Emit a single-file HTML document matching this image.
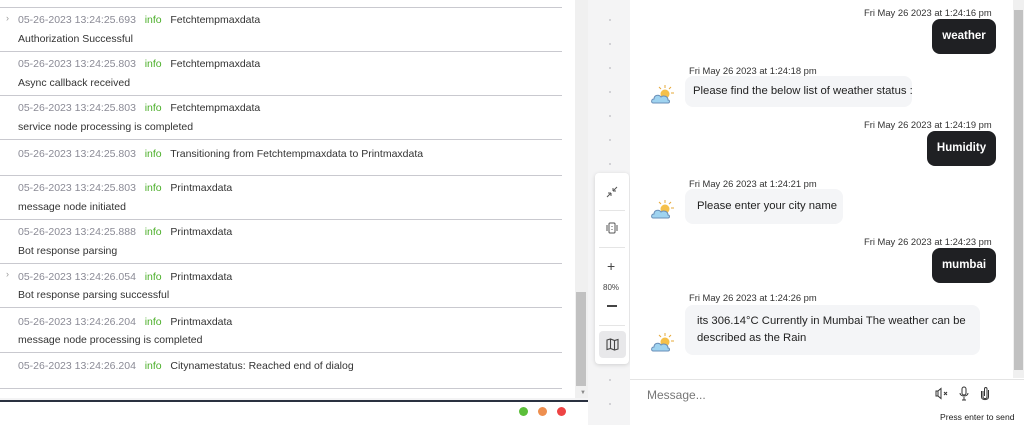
<!DOCTYPE html><html><head><style>
body{margin:0;width:1024px;height:425px;position:relative;overflow:hidden;background:#f4f4f5;font-family:"Liberation Sans",sans-serif}
.a{position:absolute}
.grid{background-image:radial-gradient(#cfcfd4 1px,transparent 1.2px);background-size:24px 24px;background-position:10px 8px}
.log{font-size:10.5px;color:#333;white-space:nowrap}
.ts{color:#8a8a95}.inf{color:#4caf2a}
.sep{height:1px;background:#c9c9cf;left:0;width:562px}
.tm{font-size:9.4px;color:#333;white-space:nowrap}
.ub{background:#1f2023;color:#fff;border-radius:8px;font-weight:bold;font-size:11.5px;text-align:center;white-space:nowrap}
.bb{background:#f4f5f7;border-radius:8px;font-size:11.3px;color:#222;white-space:nowrap}
</style></head><body>
<div class="a grid" style="left:588px;top:0;width:42px;height:425px"></div>
<div class="a" style="left:0;top:0;width:575px;height:398px;background:#fff"></div>
<div class="a" style="left:575px;top:0;width:13px;height:398px;background:#f0f0f0"></div>
<div class="a" style="left:576px;top:292px;width:10px;height:94px;background:#c1c1c1"></div>
<div class="a" style="left:580px;top:390px;font-size:6px;color:#888">▼</div>
<div class="a" style="left:0;top:400px;width:588px;height:2px;background:#2a3140"></div>
<div class="a" style="left:0;top:402px;width:588px;height:23px;background:#fff"></div>
<div class="a" style="left:519px;top:407px;width:9px;height:9px;border-radius:50%;background:#5cbf3a"></div>
<div class="a" style="left:538px;top:407px;width:9px;height:9px;border-radius:50%;background:#ee8f4f"></div>
<div class="a" style="left:557px;top:407px;width:9px;height:9px;border-radius:50%;background:#ee4444"></div>

<div class="a sep" style="top:7px"></div>
<div class="a log" style="left:6px;top:13px;color:#999;font-size:9px">›</div>
<div class="a log" style="left:18px;top:14px"><span class="ts">05-26-2023 13:24:25.693</span>&nbsp;&nbsp; <span class="inf">info</span>&nbsp;&nbsp; Fetchtempmaxdata</div>
<div class="a log" style="left:18px;top:33px">Authorization Successful</div>
<div class="a sep" style="top:51px"></div>
<div class="a log" style="left:18px;top:58px"><span class="ts">05-26-2023 13:24:25.803</span>&nbsp;&nbsp; <span class="inf">info</span>&nbsp;&nbsp; Fetchtempmaxdata</div>
<div class="a log" style="left:18px;top:77px">Async callback received</div>
<div class="a sep" style="top:95px"></div>
<div class="a log" style="left:18px;top:102px"><span class="ts">05-26-2023 13:24:25.803</span>&nbsp;&nbsp; <span class="inf">info</span>&nbsp;&nbsp; Fetchtempmaxdata</div>
<div class="a log" style="left:18px;top:121px">service node processing is completed</div>
<div class="a sep" style="top:139px"></div>
<div class="a log" style="left:18px;top:148px"><span class="ts">05-26-2023 13:24:25.803</span>&nbsp;&nbsp; <span class="inf">info</span>&nbsp;&nbsp; Transitioning from Fetchtempmaxdata to Printmaxdata</div>
<div class="a sep" style="top:175px"></div>
<div class="a log" style="left:18px;top:182px"><span class="ts">05-26-2023 13:24:25.803</span>&nbsp;&nbsp; <span class="inf">info</span>&nbsp;&nbsp; Printmaxdata</div>
<div class="a log" style="left:18px;top:201px">message node initiated</div>
<div class="a sep" style="top:219px"></div>
<div class="a log" style="left:18px;top:226px"><span class="ts">05-26-2023 13:24:25.888</span>&nbsp;&nbsp; <span class="inf">info</span>&nbsp;&nbsp; Printmaxdata</div>
<div class="a log" style="left:18px;top:245px">Bot response parsing</div>
<div class="a sep" style="top:263px"></div>
<div class="a log" style="left:6px;top:269px;color:#999;font-size:9px">›</div>
<div class="a log" style="left:18px;top:271px"><span class="ts">05-26-2023 13:24:26.054</span>&nbsp;&nbsp; <span class="inf">info</span>&nbsp;&nbsp; Printmaxdata</div>
<div class="a log" style="left:18px;top:289px">Bot response parsing successful</div>
<div class="a sep" style="top:307px"></div>
<div class="a log" style="left:18px;top:316px"><span class="ts">05-26-2023 13:24:26.204</span>&nbsp;&nbsp; <span class="inf">info</span>&nbsp;&nbsp; Printmaxdata</div>
<div class="a log" style="left:18px;top:334px">message node processing is completed</div>
<div class="a sep" style="top:352px"></div>
<div class="a log" style="left:18px;top:360px"><span class="ts">05-26-2023 13:24:26.204</span>&nbsp;&nbsp; <span class="inf">info</span>&nbsp;&nbsp; Citynamestatus: Reached end of dialog</div>
<div class="a sep" style="top:388px"></div>

<div class="a" style="left:595px;top:173px;width:34px;height:191px;background:#fff;border-radius:4px;box-shadow:0 1px 4px rgba(0,0,0,.15)"></div>
<svg class="a" style="left:605px;top:185px" width="14" height="14" viewBox="0 0 14 14" fill="none" stroke="#555" stroke-width="1"><path d="M2 12L6 8M6 8H3M6 8V11M12 2L8 6M8 6H11M8 6V3"/></svg>
<div class="a" style="left:599px;top:210px;width:26px;height:1px;background:#e5e5e5"></div>
<svg class="a" style="left:605px;top:221px" width="14" height="14" viewBox="0 0 14 14" fill="none" stroke="#555" stroke-width="1"><rect x="4" y="2" width="6" height="10" rx="1"/><path d="M2 4V10M12 4V10M7 5V6M7 8V9"/></svg>
<div class="a" style="left:599px;top:247px;width:26px;height:1px;background:#e5e5e5"></div>
<div class="a" style="left:607px;top:258px;font-size:14px;color:#444">+</div>
<div class="a" style="left:603px;top:283px;font-size:8px;color:#444">80%</div>
<div class="a" style="left:607px;top:305px;width:10px;height:1.5px;background:#444"></div>
<div class="a" style="left:599px;top:325px;width:26px;height:1px;background:#e5e5e5"></div>
<div class="a" style="left:599px;top:331px;width:27px;height:27px;background:#e8e8ea;border-radius:4px"></div>
<svg class="a" style="left:605px;top:337px" width="15" height="15" viewBox="0 0 15 15" fill="none" stroke="#444" stroke-width="1.1"><path d="M2 3L5.5 2L9.5 3.5L13 2.5V12L9.5 13L5.5 11.5L2 12.5Z M5.5 2V11.5M9.5 3.5V13"/></svg>

<div class="a" style="left:630px;top:0;width:394px;height:425px;background:#fff"></div>
<div class="a" style="left:1013px;top:0;width:11px;height:378px;background:#f0f0f0"></div>
<div class="a" style="left:1014px;top:10px;width:9px;height:360px;background:#c1c1c1"></div>
<div class="a" style="left:630px;top:379px;width:394px;height:1px;background:#e4e4e4"></div>

<div class="a tm" style="left:864px;top:7px">Fri May 26 2023 at 1:24:16 pm</div>
<div class="a ub" style="left:932px;top:19px;width:64px;height:35px;line-height:35px">weather</div>
<div class="a tm" style="left:689px;top:65px">Fri May 26 2023 at 1:24:18 pm</div>
<div class="a bb" style="left:685px;top:76px;width:227px;height:31px;line-height:31px;padding-left:8px;box-sizing:border-box">Please find the below list of weather status :</div>
<div class="a tm" style="left:864px;top:119px">Fri May 26 2023 at 1:24:19 pm</div>
<div class="a ub" style="left:927px;top:131px;width:69px;height:35px;line-height:35px">Humidity</div>
<div class="a tm" style="left:689px;top:178px">Fri May 26 2023 at 1:24:21 pm</div>
<div class="a bb" style="left:685px;top:189px;width:158px;height:35px;line-height:35px;padding-left:12px;box-sizing:border-box">Please enter your city name</div>
<div class="a tm" style="left:864px;top:236px">Fri May 26 2023 at 1:24:23 pm</div>
<div class="a ub" style="left:932px;top:248px;width:64px;height:35px;line-height:35px">mumbai</div>
<div class="a tm" style="left:689px;top:292px">Fri May 26 2023 at 1:24:26 pm</div>
<div class="a bb" style="left:685px;top:305px;width:295px;height:50px;padding:8px 12px;box-sizing:border-box;line-height:17px">its 306.14°C Currently in Mumbai The weather can be<br>described as the Rain</div>

<svg width="0" height="0" style="position:absolute"><defs><g id="wx"><g stroke="#e6a93a" stroke-width="1"><path d="M15 1V4M21 3L19 5M24 9H21M9 3L11 5"/></g><circle cx="15" cy="10" r="4.5" fill="#f5c04a"/><path d="M3 19C1 19 1 15 4 15C4 11 9 10 11 13C13 11 18 12 18 16C20 16 20 19 18 19Z" fill="#9fd3f0" stroke="#6a8fb8" stroke-width="1"/></g></defs></svg>
<svg class="a" style="left:650px;top:84px" width="26" height="22"><use href="#wx"/></svg>
<svg class="a" style="left:650px;top:199px" width="26" height="22"><use href="#wx"/></svg>
<svg class="a" style="left:650px;top:332px" width="26" height="22"><use href="#wx"/></svg>

<div class="a" style="left:647px;top:388px;font-size:12px;color:#777">Message...</div>
<svg class="a" style="left:935px;top:387px" width="14" height="13" viewBox="0 0 14 13" fill="none" stroke="#333" stroke-width="1"><path d="M1 4H3L6 1.5V11.5L3 9H1Z M3 4V9"/><path d="M9 5L12 8M12 5L9 8"/></svg>
<svg class="a" style="left:958px;top:386px" width="12" height="15" viewBox="0 0 12 15" fill="none" stroke="#333" stroke-width="1"><rect x="4" y="1" width="4" height="8" rx="2"/><path d="M2 7C2 11 10 11 10 7M6 11V14M4 14H8"/></svg>
<svg class="a" style="left:980px;top:386px" width="10" height="15" viewBox="0 0 10 15" fill="none" stroke="#333" stroke-width="1"><path d="M3 5V11C3 13 7 13 7 11V3C7 1 4.5 1 4.5 3V10"/><path d="M1.5 5V11C1.5 14.5 8.5 14.5 8.5 11V4"/></svg>
<div class="a" style="left:940px;top:412px;font-size:8.6px;color:#222;white-space:nowrap">Press enter to send</div>
</body></html>
